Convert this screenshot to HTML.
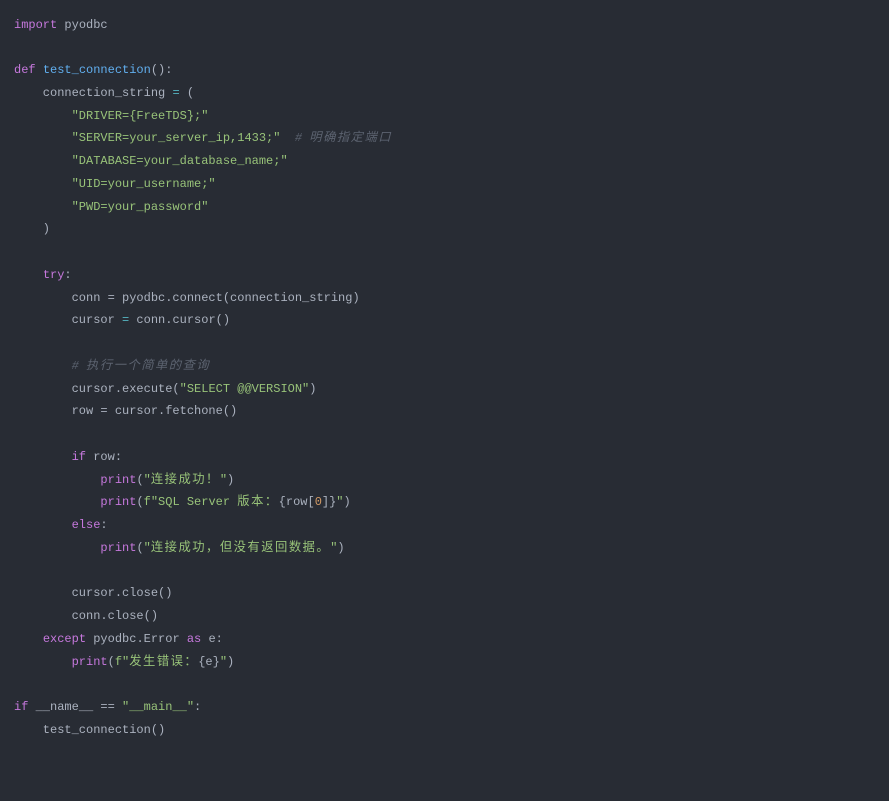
<!DOCTYPE html>
<html><head><meta charset="utf-8"><style>
html,body{margin:0;padding:0;background:#282c34;width:889px;height:801px;overflow:hidden}
pre{margin:0;position:absolute;left:14px;top:13.5px;font-family:"Liberation Mono","Noto Sans CJK SC",monospace;font-size:12px;line-height:22.75px;color:#abb2bf}
.k{color:#c678dd}.f{color:#61afef}.s{color:#98c379}.c{color:#5c6370;font-style:italic}.n{color:#d19a66}.o{color:#56b6c2}
.z{font-family:"Noto Sans CJK SC",sans-serif;font-size:12.3px;letter-spacing:1.5px;line-height:0}
</style></head><body><pre><span class="k">import</span> pyodbc

<span class="k">def</span> <span class="f">test_connection</span>():
    connection_string <span class="o">=</span> (
        <span class="s">"DRIVER={FreeTDS};"</span>
        <span class="s">"SERVER=your_server_ip,1433;"</span>  <span class="c"># <span class="z">明确指定端口</span></span>
        <span class="s">"DATABASE=your_database_name;"</span>
        <span class="s">"UID=your_username;"</span>
        <span class="s">"PWD=your_password"</span>
    )

    <span class="k">try</span>:
        conn = pyodbc.connect(connection_string)
        cursor <span class="o">=</span> conn.cursor()

        <span class="c"># <span class="z">执行一个简单的查询</span></span>
        cursor.execute(<span class="s">"SELECT @@VERSION"</span>)
        row = cursor.fetchone()

        <span class="k">if</span> row:
            <span class="k">print</span>(<span class="s">"<span class="z">连接成功！</span>"</span>)
            <span class="k">print</span>(<span class="s">f"SQL Server <span class="z">版本：</span></span>{row[<span class="n">0</span>]}<span class="s">"</span>)
        <span class="k">else</span>:
            <span class="k">print</span>(<span class="s">"<span class="z">连接成功，但没有返回数据。</span>"</span>)

        cursor.close()
        conn.close()
    <span class="k">except</span> pyodbc.Error <span class="k">as</span> e:
        <span class="k">print</span>(<span class="s">f"<span class="z">发生错误：</span></span>{e}<span class="s">"</span>)

<span class="k">if</span> __name__ == <span class="s">"__main__"</span>:
    test_connection()
</pre></body></html>
